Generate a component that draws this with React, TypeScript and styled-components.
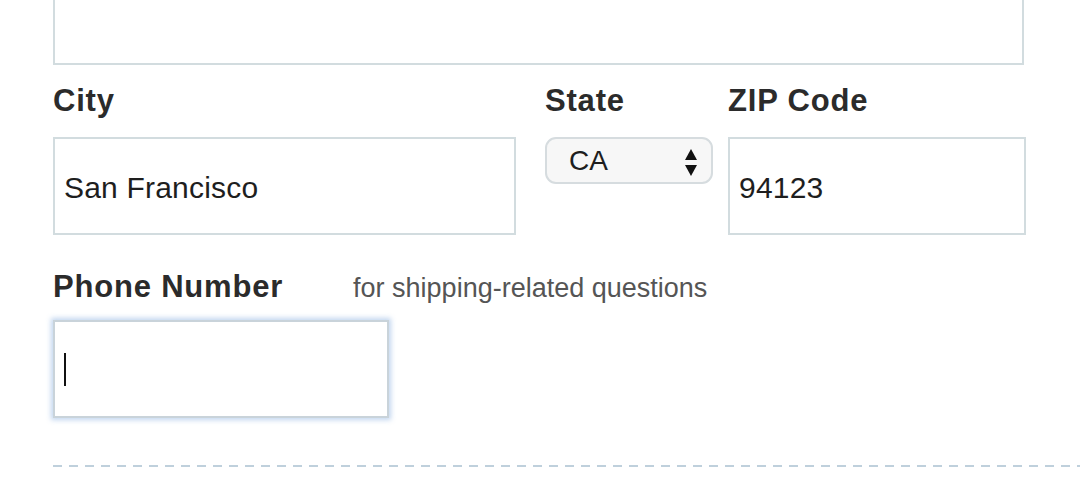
import React from "react";
import styled, { createGlobalStyle } from "styled-components";

const Global = createGlobalStyle`
  html, body { margin: 0; padding: 0; background: #ffffff; }
  body { font-family: "Liberation Sans", Arial, sans-serif; overflow: hidden; }
  * { box-sizing: border-box; }
`;

const Page = styled.div`
  width: 1080px;
  height: 494px;
  overflow: hidden;
  padding-left: 53px;
  display: flex;
  flex-direction: column;
`;

const AddressBox = styled.div`
  width: 971px;
  height: 105px;
  margin-top: -40px;
  border: 2px solid #d2dcdf;
  background: #fff;
`;

const Row = styled.div<{ $top: number }>`
  display: flex;
  align-items: flex-start;
  margin-top: ${(p) => p.$top}px;
`;

const Field = styled.div<{ $width: number; $offset?: number }>`
  width: ${(p) => p.$width}px;
  margin-left: ${(p) => p.$offset ?? 0}px;
  display: flex;
  flex-direction: column;
`;

const LabelLine = styled.div`
  display: flex;
  align-items: baseline;
  gap: 70px;
`;

const Label = styled.label<{ $gap: number }>`
  display: block;
  font-family: "Liberation Sans", Arial, sans-serif;
  font-weight: 700;
  font-size: 31px;
  line-height: 31px;
  letter-spacing: 0.8px;
  color: #2b2b2b;
  margin-bottom: ${(p) => p.$gap}px;
  white-space: nowrap;
`;

const Hint = styled.span`
  font-family: "Liberation Sans", Arial, sans-serif;
  font-size: 27px;
  color: #555555;
  white-space: nowrap;
`;

const TextBox = styled.div<{ $focused?: boolean }>`
  height: 98px;
  border: 2px solid ${(p) => (p.$focused ? "#c9d3da" : "#d2dcdf")};
  background: #fff;
  display: flex;
  align-items: center;
  padding: 4px 0 0 9px;
  font-family: "Liberation Sans", Arial, sans-serif;
  font-size: 30px;
  letter-spacing: 0.2px;
  color: #1e1e1e;
  box-shadow: ${(p) =>
    p.$focused ? "0 0 5px 2px rgba(120, 165, 220, 0.45)" : "none"};
`;

const Caret = styled.span`
  display: inline-block;
  width: 2px;
  height: 33px;
  background: #111;
  margin-top: -4px;
`;

const Select = styled.div`
  height: 47px;
  border: 2px solid #d6dcdf;
  border-radius: 11px;
  background: #f7f7f7;
  display: flex;
  align-items: flex-start;
  justify-content: space-between;
  padding: 8px 13px 0 22px;
  font-family: "Liberation Sans", Arial, sans-serif;
  font-size: 28px;
  line-height: 28px;
  color: #1e1e1e;
`;

const Arrows = styled.svg`
  width: 14px;
  height: 30px;
  margin-top: 1px;
`;

const Divider = styled.div`
  margin-top: 47px;
  height: 2px;
  width: 1100px;
  background: repeating-linear-gradient(
    to right,
    #bfd0dc 0,
    #bfd0dc 9px,
    transparent 9px,
    transparent 16px
  );
`;

export default function App() {
  return (
    <>
      <Global />
      <Page>
        <AddressBox />
        <Row $top={20}>
          <Field $width={463}>
            <Label $gap={21}>City</Label>
            <TextBox>San Francisco</TextBox>
          </Field>
          <Field $width={168} $offset={29}>
            <Label $gap={21}>State</Label>
            <Select>
              <span>CA</span>
              <Arrows viewBox="0 0 14 30">
                <polygon points="7,1 13,12 1,12" fill="#111" />
                <polygon points="1,17 13,17 7,28" fill="#111" />
              </Arrows>
            </Select>
          </Field>
          <Field $width={298} $offset={15}>
            <Label $gap={21}>ZIP Code</Label>
            <TextBox>94123</TextBox>
          </Field>
        </Row>
        <Row $top={36}>
          <Field $width={336}>
            <LabelLine>
              <Label $gap={18}>Phone Number</Label>
              <Hint>for shipping-related questions</Hint>
            </LabelLine>
            <TextBox $focused>
              <Caret />
            </TextBox>
          </Field>
        </Row>
        <Divider />
      </Page>
    </>
  );
}
